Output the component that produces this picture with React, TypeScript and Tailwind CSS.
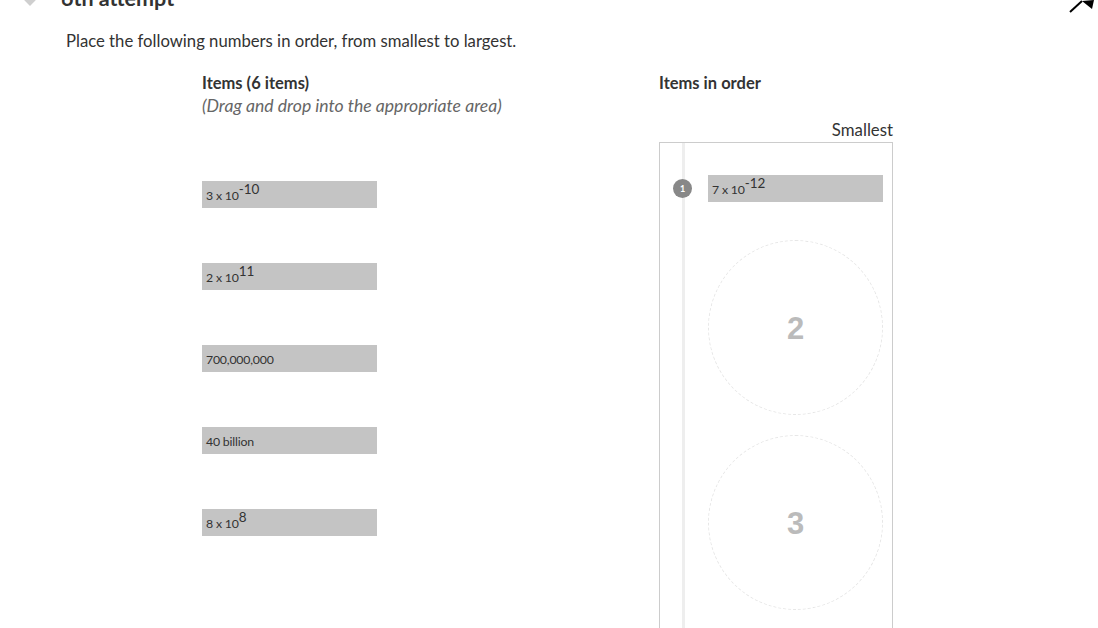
import React from 'react';

const items = [
    { base: '3 x 10', exp: '-10' },
    { base: '2 x 10', exp: '11' },
    { base: '700,000,000' },
    { base: '40 billion' },
    { base: '8 x 10', exp: '8' },
];

const ItemBox = ({ base, exp }: { base: string; exp?: string }) => (
    <div className="w-[175px] h-[27px] bg-[#c4c4c4] flex items-center px-[4px] text-[12.3px] text-[#333] leading-none">
        <span className="mt-[3px] tracking-[-0.2px]">{base}</span>
        {exp && <span className="text-[13.5px] relative -top-[5px]">{exp}</span>}
    </div>
);

const Slot = ({ n }: { n: number }) => (
    <div className="w-[175px] h-[175px] rounded-full border border-dashed border-[#e6e6e6] flex items-center justify-center">
        <span className="text-[31px] font-bold text-[#bbb] mt-[4px] font-['Liberation_Sans',Arial,sans-serif]">{n}</span>
    </div>
);

export default function App() {
    return (
        <div className="relative h-[628px] overflow-hidden bg-white text-[#333] font-['Lato','Open_Sans',sans-serif]">
            {/* cursor in the corner */}
            <svg className="absolute right-0 top-0" width="30" height="14" viewBox="0 0 30 14">
                <path d="M2 12 L14 1" stroke="#000" strokeWidth="2" fill="none" />
                <path d="M14 1 L24 9 L26 0 Z" fill="#000" />
            </svg>

            {/* Header */}
            <div className="flex items-center -mt-[13px] pl-[23px]">
                <div className="w-[14px] h-[14px] bg-[#cfcfcf] rotate-45 -mt-[4px]" />
                <h2 className="ml-[24px] text-[21.5px] font-bold leading-[22px]">6th attempt</h2>
            </div>

            <p className="ml-[66px] mt-[22px] text-[16.7px] leading-[20px]">
                Place the following numbers in order, from smallest to largest.
            </p>

            <div className="flex pl-[202px] mt-[22px]">
                {/* Source items */}
                <div className="w-[457px] flex flex-col">
                    <h3 className="text-[16.5px] font-bold leading-[20px]">Items (6 items)</h3>
                    <p className="text-[17.6px] italic text-[#666] leading-[22px] mt-[2px]">
                        (Drag and drop into the appropriate area)
                    </p>
                    <div className="flex flex-col gap-[55px] mt-[64px]">
                        {items.map((it, i) => (
                            <ItemBox key={i} base={it.base} exp={it.exp} />
                        ))}
                    </div>
                </div>

                {/* Target list */}
                <div className="w-[234px] flex flex-col">
                    <h3 className="text-[16.5px] font-bold leading-[20px]">Items in order</h3>
                    <div className="text-right text-[16.8px] leading-[18px] mt-[28px]">Smallest</div>
                    <div className="flex border border-[#ccc] border-b-0 h-[500px] mt-[3px]">
                        <div className="w-[22px] shrink-0" />
                        <div className="relative border-l-[3px] border-[#eeeeee] flex-1 pl-[23px] pt-[32px] flex flex-col">
                            <div className="absolute left-[-12px] top-[36px] w-[19px] h-[19px] rounded-full bg-[#888] text-white text-[9px] font-bold flex items-center justify-center">
                                1
                            </div>
                            <ItemBox base="7 x 10" exp="-12" />
                            <div className="mt-[38px]">
                                <Slot n={2} />
                            </div>
                            <div className="mt-[20px]">
                                <Slot n={3} />
                            </div>
                        </div>
                    </div>
                </div>
            </div>
        </div>
    );
}
